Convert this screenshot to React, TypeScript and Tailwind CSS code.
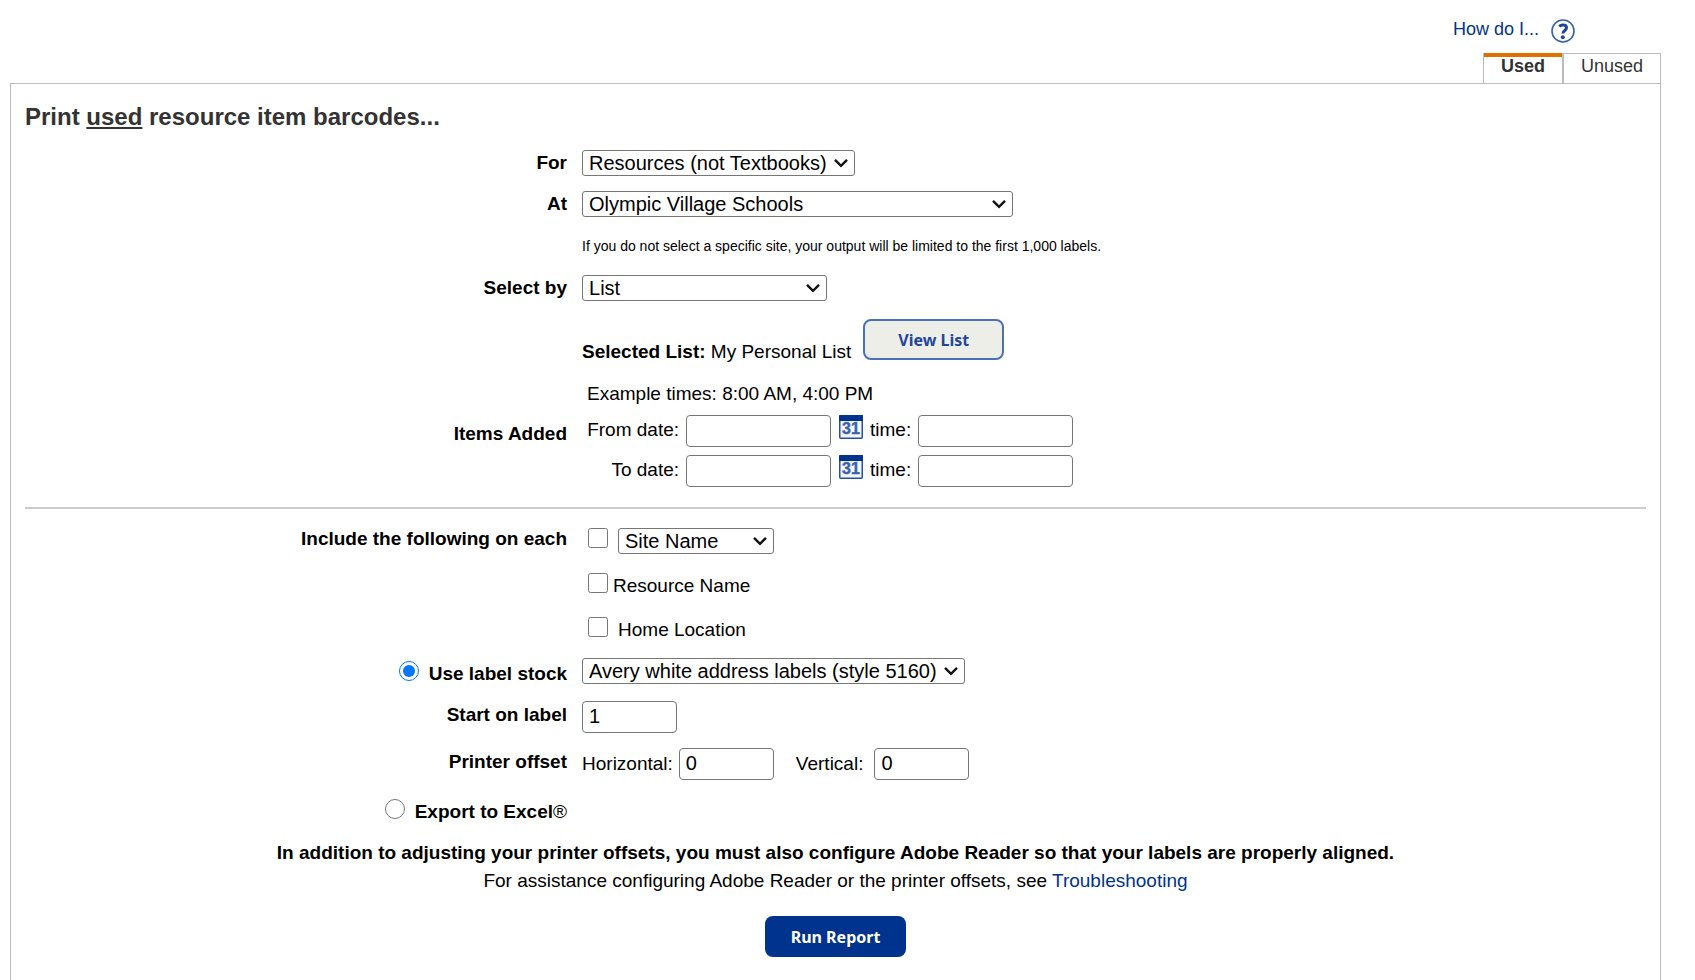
import { useState } from "react";
import type { ReactNode, SelectHTMLAttributes } from "react";

interface SelectBoxProps extends SelectHTMLAttributes<HTMLSelectElement> {
  options: string[];
}

const SelectBox = ({ options, className = "", ...rest }: SelectBoxProps) => (
  <span className={`relative block max-w-full ${className}`}>
    <select
      {...rest}
      className="block h-[26px] w-full appearance-none rounded-[3px] border border-[#767676] bg-white pl-[6px] pr-6 text-[20px] leading-6 text-black"
    >
      {options.map((option) => (
        <option key={option}>{option}</option>
      ))}
    </select>
    <svg
      viewBox="0 0 14 10"
      className="pointer-events-none absolute right-[7px] top-2 h-[10px] w-[14px]"
      fill="none"
      stroke="#111"
      strokeWidth="2.4"
    >
      <path d="M1 1.8 7 7.8 13 1.8" />
    </svg>
  </span>
);

const CalendarIcon = () => (
  <svg viewBox="0 0 24 24" className="block size-6">
    <rect x="0.75" y="0.75" width="22.5" height="22.5" rx="1" fill="#f4f6fb" stroke="#2450a4" strokeWidth="1.5" />
    <path d="M0 1a1 1 0 0 1 1-1h22a1 1 0 0 1 1 1v5H0z" fill="#00338d" />
    <text
      x="12"
      y="19"
      textAnchor="middle"
      fontSize="16"
      fontWeight="700"
      fontFamily="'Liberation Sans', Arial, sans-serif"
      fill="#3a62ae"
      stroke="#3a62ae"
      strokeWidth="0.4"
    >
      31
    </text>
  </svg>
);

const HelpIcon = () => (
  <svg viewBox="0 0 24 24" className="block size-6">
    <circle cx="12" cy="12" r="11" fill="#fff" stroke="#3a60ac" strokeWidth="1.6" />
    <path
      d="M8.2 7.4C9.2 6.4 10.4 5.9 12 5.9c2.2 0 3.5 1.1 3.5 2.9 0 2.7-3.6 2.8-3.6 5.8"
      fill="none"
      stroke="#1f469c"
      strokeWidth="3"
    />
    <circle cx="11.8" cy="18.2" r="2" fill="#1f469c" />
  </svg>
);

const Row = ({ label, className = "", children }: { label?: ReactNode; className?: string; children?: ReactNode }) => (
  <div className={`grid grid-cols-[27fr_53fr] gap-x-[15px] ${className}`}>
    <div className="text-right font-bold">{label}</div>
    <div>{children}</div>
  </div>
);

const DateRow = ({ id, label }: { id: string; label: string }) => (
  <div className="flex items-start leading-[30px]">
    <label htmlFor={`${id}-date`} className="w-[97px] text-right">
      {label}
    </label>
    <input
      id={`${id}-date`}
      type="text"
      className="ml-[7px] h-8 w-[145px] rounded-[4px] border border-[#767676] px-[6px] text-[20px]"
    />
    <button type="button" aria-label={`${label} calendar`} className="ml-2">
      <CalendarIcon />
    </button>
    <label htmlFor={`${id}-time`} className="ml-[7px]">
      time:
    </label>
    <input
      id={`${id}-time`}
      type="text"
      className="ml-[7px] h-8 w-[155px] rounded-[4px] border border-[#767676] px-[6px] text-[20px]"
    />
  </div>
);

const numberBox = "h-8 w-[95px] rounded-[4px] border border-[#767676] px-[6px] pb-[2px] text-[20px] leading-7";

const App = () => {
  const [output, setOutput] = useState("labels");

  return (
    <div className="flex min-h-screen flex-col bg-white pl-[10px] pr-[34px] font-['Liberation_Sans',Arial,sans-serif] text-[19px] text-black">
      <div className="flex items-start justify-end gap-3 pr-[86px] pt-[17px] text-lg leading-6">
        <a href="#help" className="text-[#00338d]">
          How do I...
        </a>
        <a href="#help" aria-label="Help" className="mt-[2px]">
          <HelpIcon />
        </a>
      </div>

      <nav className="mt-[10px] flex h-[30px] justify-end text-lg leading-[18px] text-[#333]">
        <a href="#used" className="flex border-l border-r-2 border-[#bbb] font-bold">
          <span className="border-t-4 border-[#e07000] px-[17px]">Used</span>
        </a>
        <a href="#unused" className="border-r border-t border-[#bbb] px-[17px] pt-[3px]">
          Unused
        </a>
      </nav>

      <main className="flex-1 border-x border-t border-[#bbb] px-[14px] pb-6 pt-[17px]">
        <h1 className="text-2xl font-bold leading-8 text-[#333]">
          Print <span className="underline decoration-2 underline-offset-2">used</span> resource item barcodes...
        </h1>

        <form onSubmit={(e) => e.preventDefault()}>
          <Row className="mt-[17px] leading-[26px]" label={<label htmlFor="for">For</label>}>
            <SelectBox id="for" options={["Resources (not Textbooks)"]} className="w-[273px]" />
          </Row>
          <Row className="mt-[15px] leading-[26px]" label={<label htmlFor="at">At</label>}>
            <SelectBox id="at" options={["Olympic Village Schools"]} className="w-[431px]" />
          </Row>
          <Row className="mt-[19px]">
            <p className="text-sm leading-5">
              If you do not select a specific site, your output will be limited to the first 1,000 labels.
            </p>
          </Row>
          <Row className="mt-[19px] leading-[26px]" label={<label htmlFor="select-by">Select by</label>}>
            <SelectBox id="select-by" options={["List"]} className="w-[245px]" />
          </Row>
          <Row className="mt-[18px] leading-[26px]">
            <div className="flex items-start">
              <p className="mt-5">
                <b>Selected List:</b> My Personal List
              </p>
              <button
                type="button"
                className="ml-3 h-[41px] w-[141px] rounded-lg border-2 border-[#4a70b8] bg-[#eeeee9] font-['Noto_Sans','Open_Sans',sans-serif] text-base font-bold text-[#1f469c]"
              >
                View List
              </button>
            </div>
          </Row>
          <div className="mt-4 grid grid-cols-[27fr_53fr] items-center gap-x-[15px]">
            <div className="text-right font-bold">Items Added</div>
            <div>
              <p className="pl-[5px] leading-[26px]">Example times: 8:00 AM, 4:00 PM</p>
              <div className="mt-2 flex flex-col gap-2">
                <DateRow id="from" label="From date:" />
                <DateRow id="to" label="To date:" />
              </div>
            </div>
          </div>

          <hr className="mt-5 border-t-2 border-[#ccc]" />

          <Row className="mt-[19px] leading-[22px]" label="Include the following on each">
            <div className="flex items-start pl-[6px]">
              <input type="checkbox" aria-label="Include site name" className="size-5" />
              <SelectBox aria-label="Name to include" options={["Site Name"]} className="ml-[10px] w-[156px]" />
            </div>
          </Row>
          <Row className="mt-[19px] leading-[26px]">
            <label className="flex items-start gap-[5px] pl-[6px]">
              <input type="checkbox" className="size-5" />
              Resource Name
            </label>
          </Row>
          <Row className="mt-[18px] leading-[26px]">
            <label className="flex items-start gap-[10px] pl-[6px]">
              <input type="checkbox" className="size-5" />
              Home Location
            </label>
          </Row>

          <Row
            className="mt-[15px] leading-8"
            label={
              <label className="flex items-start justify-end gap-[10px]">
                <input
                  type="radio"
                  name="output"
                  checked={output === "labels"}
                  onChange={() => setOutput("labels")}
                  className="mt-[3px] size-5"
                />
                Use label stock
              </label>
            }
          >
            <SelectBox
              aria-label="Label stock"
              options={["Avery white address labels (style 5160)"]}
              className="w-[383px]"
            />
          </Row>
          <Row className="mt-[11px] leading-7" label={<label htmlFor="start">Start on label</label>}>
            <input id="start" type="text" defaultValue="1" className={`block ${numberBox}`} />
          </Row>
          <Row className="mt-[15px] leading-7" label="Printer offset">
            <div className="flex items-start leading-8">
              <label htmlFor="horizontal">Horizontal:</label>
              <input id="horizontal" type="text" defaultValue="0" className={`ml-[6px] ${numberBox}`} />
              <label htmlFor="vertical" className="ml-[22px]">
                Vertical:
              </label>
              <input id="vertical" type="text" defaultValue="0" className={`ml-[11px] ${numberBox}`} />
            </div>
          </Row>
          <Row
            className="mt-4 leading-8"
            label={
              <label className="flex items-start justify-end gap-[10px]">
                <input
                  type="radio"
                  name="output"
                  checked={output === "excel"}
                  onChange={() => setOutput("excel")}
                  className="mt-[3px] size-5"
                />
                Export to Excel<span className="-ml-[10px] font-normal">®</span>
              </label>
            }
          />

          <div className="mt-[11px] text-center leading-7">
            <p className="font-bold">
              In addition to adjusting your printer offsets, you must also configure Adobe Reader so that your labels
              are properly aligned.
            </p>
            <p>
              For assistance configuring Adobe Reader or the printer offsets, see{" "}
              <a href="#troubleshooting" className="text-[#00338d]">
                Troubleshooting
              </a>
            </p>
            <button
              type="submit"
              className="mt-[21px] h-[41px] w-[141px] rounded-lg bg-[#00338d] font-['Noto_Sans','Open_Sans',sans-serif] text-base font-bold text-white"
            >
              Run Report
            </button>
          </div>
        </form>
      </main>
    </div>
  );
};

export default App;
